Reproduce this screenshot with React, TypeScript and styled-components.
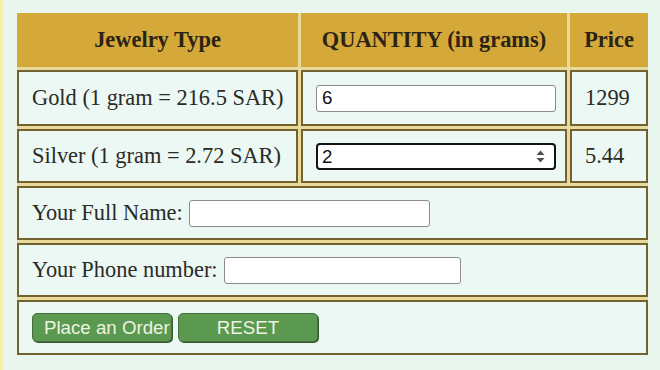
import { Fragment } from 'react';
import styled, { createGlobalStyle } from 'styled-components';

const GlobalStyle = createGlobalStyle`
  html, body {
    margin: 0;
    padding: 0;
    background: #e8f6ee;
  }
`;

const Page = styled.div`
  box-sizing: border-box;
  min-height: 370px;
  border-left: 3px solid #f3f0ae;
  padding: 13px 0 0 14px;
  font-family: 'Liberation Serif', 'Times New Roman', serif;
  font-size: 22.4px;
  color: #2a2a26;
`;

const OrderGrid = styled.div`
  display: grid;
  width: 631px;
  grid-template-columns: 281px 266px 78px;
  grid-template-rows: 54px 56px 54px 54px 54px 55px;
  gap: 3px;
  background: #e8d99c;
`;

const HeadCell = styled.div`
  display: flex;
  align-items: center;
  justify-content: center;
  background: #d4a93a;
  font-weight: bold;
  color: #2b2314;
  white-space: nowrap;
`;

const Cell = styled.div<{ $full?: boolean }>`
  box-sizing: border-box;
  display: flex;
  align-items: center;
  gap: 6px;
  padding: 0 12px 0 13px;
  background: #ecf8f4;
  border: 2px solid #74622e;
  white-space: nowrap;
  grid-column: ${({ $full }) => ($full ? '1 / -1' : 'auto')};
`;

const TextInput = styled.input<{ $width: number }>`
  box-sizing: border-box;
  width: ${({ $width }) => $width}px;
  height: 27px;
  margin: 0;
  padding: 0 5px;
  border: 1px solid #8c8c8c;
  border-radius: 3px;
  background: #fff;
  font-family: 'Liberation Sans', Arial, sans-serif;
  font-size: 18.7px;
  color: #111;
  outline: none;
`;

const NumberBox = styled.div`
  position: relative;
  width: 240px;
  height: 27px;
`;

const FocusedInput = styled(TextInput)`
  border: 2px solid #141414;
  border-radius: 4px;
  padding: 0 4px;
`;

const Spinner = styled.svg`
  position: absolute;
  right: 10px;
  top: 6px;
  width: 11px;
  height: 15px;
  pointer-events: none;
`;

const ButtonRow = styled.div`
  display: flex;
  gap: 6px;
`;

const Button = styled.button`
  box-sizing: border-box;
  width: 140px;
  height: 29px;
  margin: 0;
  padding: 0 11px;
  border: 1px solid #466f3d;
  border-radius: 5px;
  background: #5b9950;
  box-shadow: 1px 1px 0 #3b5c33;
  color: #eef3e2;
  font-family: 'Liberation Sans', Arial, sans-serif;
  font-size: 18.7px;
  text-align: center;
  white-space: nowrap;
  overflow: visible;
  cursor: pointer;
`;

const rows = [
  { label: 'Gold (1 gram = 216.5 SAR)', qty: '6', price: '1299', focused: false },
  { label: 'Silver (1 gram = 2.72 SAR)', qty: '2', price: '5.44', focused: true },
];

export default function App() {
  return (
    <>
      <GlobalStyle />
      <Page>
        <OrderGrid>
          <HeadCell>Jewelry Type</HeadCell>
          <HeadCell>QUANTITY (in grams)</HeadCell>
          <HeadCell>Price</HeadCell>

          {rows.map((r) => (
            <Fragment key={r.label}>
              <Cell>{r.label}</Cell>
              <Cell>
                {r.focused ? (
                  <NumberBox>
                    <FocusedInput $width={240} defaultValue={r.qty} readOnly />
                    <Spinner viewBox="0 0 11 15">
                      <path d="M1.5 6 L5.5 1.5 L9.5 6 Z" fill="#4f4f4f" />
                      <path d="M1.5 9 L5.5 13.5 L9.5 9 Z" fill="#4f4f4f" />
                    </Spinner>
                  </NumberBox>
                ) : (
                  <TextInput $width={240} defaultValue={r.qty} readOnly />
                )}
              </Cell>
              <Cell>{r.price}</Cell>
            </Fragment>
          ))}

          <Cell $full>
            Your Full Name: <TextInput $width={241} />
          </Cell>
          <Cell $full>
            Your Phone number: <TextInput $width={237} />
          </Cell>
          <Cell $full>
            <ButtonRow>
              <Button>Place an Order</Button>
              <Button>RESET</Button>
            </ButtonRow>
          </Cell>
        </OrderGrid>
      </Page>
    </>
  );
}
